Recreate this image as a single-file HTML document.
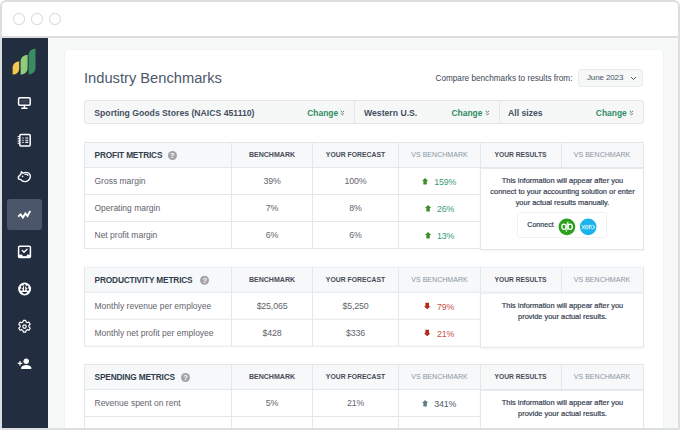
<!DOCTYPE html>
<html>
<head>
<meta charset="utf-8">
<title>Industry Benchmarks</title>
<style>
*{box-sizing:border-box;margin:0;padding:0}
html,body{width:680px;height:430px;overflow:hidden;background:#fff}
body{font-family:"Liberation Sans",sans-serif;color:#3c4656;position:relative}
.abs{position:absolute}
.win{position:absolute;left:0;top:0;width:680px;height:430px;border:2px solid #dcdfe2;border-radius:6px 6px 2px 2px;background:#fff;overflow:hidden}
.inner{position:absolute;left:-2px;top:-2px;width:680px;height:430px}
.dot{position:absolute;top:13.3px;width:11.5px;height:11.5px;border:1.5px solid #d4d5d6;border-radius:50%}
.sep{position:absolute;left:0;top:36px;width:680px;height:2px;background:#dadcde}
.side{position:absolute;left:2px;top:38px;width:46px;height:390px;background:#232d40}
.main{position:absolute;left:48px;top:38px;width:630px;height:390px;background:#f7f9f9}
.card{position:absolute;left:65px;top:50px;width:597.6px;height:400px;background:#fff;box-shadow:0 0 0 .6px #edf0f1,0 0 2px rgba(40,60,80,.06);border-radius:3px}
.active{position:absolute;left:7px;top:199px;width:34.5px;height:31.3px;border-radius:3px;background:#4b566a}
.ico{position:absolute;overflow:visible}
h1{position:absolute;left:84px;top:69.5px;font-size:14.7px;font-weight:400;color:#4c586b;line-height:17px;white-space:nowrap;letter-spacing:0}
.cmp{position:absolute;left:435.5px;top:74.3px;font-size:8.2px;line-height:10px;color:#3c4656;white-space:nowrap}
.dd{position:absolute;left:578px;top:69px;width:65.3px;height:18px;background:#f6f8f8;border:1px solid #e9eced;border-radius:3px}
.dd span{position:absolute;left:8px;top:3.2px;font-size:8px;letter-spacing:-.13px;line-height:10px;color:#4a5566;white-space:nowrap}
.fbar{position:absolute;left:84px;top:99.5px;width:559.5px;height:24.5px;background:#f6f8f8;border:1px solid #e2e6e8;border-radius:3px}
.fbar .dv{position:absolute;top:0;width:1px;height:100%;background:#e2e6e8}
.ft{position:absolute;top:108px;font-size:8.66px;line-height:10px;font-weight:700;color:#444f60;white-space:nowrap}
.chg{position:absolute;top:108px;font-size:8.45px;line-height:10px;font-weight:700;color:#2f8c64;white-space:nowrap}
.tbl{position:absolute;left:84px;width:560px;border:1px solid #e3e7ea;background:#fff}
.hd{position:absolute;left:0;top:0;width:100%;height:25px;background:#f6f8f9;border-bottom:1px solid #e3e7ea}
.vl{position:absolute;top:0;width:1px;background:#e3e7ea}
.hl{position:absolute;left:0;height:1px;background:#e3e7ea;width:396px}
.ttl{position:absolute;left:9.6px;margin-top:-.8px;font-size:8.3px;letter-spacing:-.17px;font-weight:700;color:#333d4c;line-height:10px;white-space:nowrap}
.ch{position:absolute;font-size:7.05px;font-weight:700;color:#474d57;line-height:10px;text-align:center;white-space:nowrap}
.ch.l{font-weight:400;color:#8a96a3}
.rl{position:absolute;left:9.5px;margin-top:-.6px;font-size:8.5px;color:#5f646c;line-height:10px;white-space:nowrap}
.v{position:absolute;margin-top:-.7px;font-size:8.8px;letter-spacing:-.15px;color:#5f646c;line-height:10px;text-align:center;white-space:nowrap}
.g{color:#3a9a78}.r{color:#c4524a}.n{color:#4e5966}
.help{position:absolute;margin:-.5px 0 0 -.9px;width:9.2px;height:9.2px;border-radius:50%;background:#a2a4a7;color:#fff;font-size:7.4px;font-weight:700;line-height:9.6px;text-align:center}
.pan{position:absolute;left:395px;width:164px;background:#fff;border:1px solid #e3e7ea;border-top-color:#e8ebee;box-shadow:0 1px 2px rgba(0,0,0,.05)}
.pt{position:absolute;left:396px;width:163px;margin-top:.4px;font-size:7.45px;line-height:10.9px;color:#364152;-webkit-text-stroke:.2px #364152;text-align:center;white-space:nowrap}
.cbox{position:absolute;left:432px;top:69px;width:90px;height:26px;border:1px solid #eff1f3;border-radius:3px;background:#fff}
</style>
</head>
<body>
<div class="win"><div class="inner">
  <div class="dot" style="left:13.3px"></div>
  <div class="dot" style="left:31.3px"></div>
  <div class="dot" style="left:49.3px"></div>
  <div class="sep"></div>
  <div class="side"></div>
  <div class="main"></div>
  <div class="card"></div>

  <!-- sidebar -->
  <div class="active"></div>
  <svg class="ico" style="left:0;top:0" width="60" height="430" viewBox="0 0 60 430">
    <!-- logo -->
    <path d="M12.6 74.6 V68 C12.6 64 15.5 61.6 19.2 61.6 V68.2 C19.2 72.2 16.3 74.6 12.6 74.6Z" fill="#f4c74f"/>
    <path d="M20.6 74.4 V61.5 C20.6 57.5 23.5 55 27.6 55 V67.9 C27.6 71.9 24.7 74.4 20.6 74.4Z" fill="#8fce78"/>
    <path d="M28.6 74.2 V55.3 C28.6 51.3 31.5 48.8 35.5 48.8 V67.7 C35.5 71.7 32.6 74.2 28.6 74.2Z" fill="#3a8c62"/>
    <!-- monitor -->
    <g fill="none" stroke="#fff" stroke-width="1.5" stroke-linejoin="round" stroke-linecap="round">
      <rect x="18.6" y="97.7" width="11.6" height="7.6" rx="1.2"/>
      <rect x="20.4" y="99.6" width="8" height="3.8" stroke="none" fill="rgba(255,255,255,.1)"/>
      <path d="M24.4 105.5 V108.2 M21.8 108.3 H27"/>
    </g>
    <!-- notebook -->
    <g fill="none" stroke="#fff" stroke-width="1.5" stroke-linejoin="round">
      <rect x="19.8" y="134.4" width="10.4" height="11.6" rx="1.2"/>
    </g>
    <g stroke="#fff" stroke-width="1" fill="none">
      <path d="M17.6 136.6 H19.6 M17.6 138.8 H19.6 M17.6 141 H19.6 M17.6 143.2 H19.6"/>
    </g>
    <g stroke="#fff" stroke-width="1.1" fill="none">
      <path d="M25.3 138 H28.2 M25.3 140.2 H28.2 M25.3 142.4 H28.2"/>
    </g>
    <g stroke="#a8aeb8" stroke-width="1.1" fill="none">
      <path d="M21.8 138 H24 M21.8 140.2 H24 M21.8 142.4 H24"/>
    </g>
    <!-- piggy -->
    <g fill="none" stroke="#fff" stroke-width="1.4" stroke-linejoin="round" stroke-linecap="round">
      <path d="M21.4 171.6 C22 172.6 22.6 173 23 173.2 C24.2 172.5 25.4 172.3 26.4 172.4 C29.2 172.6 30.5 174.8 30.3 176.8 C30.1 179.6 27.5 181.6 24.8 181.6 C22.8 181.6 21.6 180.6 20.8 179.6 L18.4 178.8 V176.4 L19.6 175.8 C20 174.8 20.6 174 21.2 173.4 Z"/>
      <path d="M25 174.3 C26.2 174 27.2 174.4 27.9 175.2" stroke-width="1.3"/>
    </g>
    <circle cx="22.6" cy="176.4" r=".8" fill="#fff"/>
    <!-- chart line -->
    <path d="M18.2 216.6 L20.6 214.4 L22.9 217.6 L25.4 213.4 L27.5 216 L30.2 211" fill="none" stroke="#fff" stroke-width="1.9" stroke-linejoin="miter" stroke-linecap="butt"/>
    <!-- inbox check -->
    <g fill="none" stroke="#fff" stroke-linejoin="round" stroke-linecap="round">
      <rect x="18.6" y="246.3" width="11.8" height="11.3" rx="1" stroke-width="1.5"/>
      <path d="M19 254.9 H22.2 V256.5 H27 V254.9 H30 V257.4 H19Z" stroke-width=".6" fill="#fff"/>
      <path d="M22.3 250.6 L24 252.2 L27 249.2" stroke-width="1.4"/>
    </g>
    <!-- gauge circle -->
    <circle cx="24.6" cy="289" r="6.5" fill="#fff"/>
    <g fill="#232d40">
      <circle cx="21.5" cy="289.5" r="1.2"/><circle cx="22" cy="286.7" r="1.2"/><circle cx="24.65" cy="285.5" r="1.2"/><circle cx="27.3" cy="286.7" r="1.2"/><circle cx="27.8" cy="289.5" r="1.2"/>
      <rect x="24.05" y="286" width="1.2" height="4.6"/>
      <path d="M22 292.1 H27.3 C26.9 293.3 25.9 293.9 24.65 293.9 C23.4 293.9 22.4 293.3 22 292.1Z"/>
    </g>
    <!-- gear -->
    <g fill="none" stroke="#fff" stroke-width="1.2" stroke-linejoin="round">
      <path d="M23.3 320.3 h2.4 l.4 1.7 1.2 .7 1.7 -.5 1.2 2.1 -1.3 1.2 v1.4 l1.3 1.2 -1.2 2.1 -1.7 -.5 -1.2 .7 -.4 1.7 h-2.4 l-.4 -1.7 -1.2 -.7 -1.7 .5 -1.2 -2.1 1.3 -1.2 v-1.4 l-1.3 -1.2 1.2 -2.1 1.7 .5 1.2 -.7z"/>
      <circle cx="24.5" cy="326.6" r="1.7"/>
    </g>
    <!-- person add -->
    <g fill="#fff">
      <circle cx="26.2" cy="361.3" r="2.7"/>
      <path d="M21.2 369 V368 C21.2 366 24 365 26.2 365 C28.4 365 31.3 366 31.3 368 V369Z"/>
      <rect x="17.7" y="362.7" width="4.6" height="1.2"/>
      <rect x="19.4" y="361" width="1.2" height="4.6"/>
    </g>
  </svg>

  <!-- header -->
  <h1>Industry Benchmarks</h1>
  <div class="cmp">Compare benchmarks to results from:</div>
  <div class="dd"><span>June 2023</span>
    <svg class="ico" style="left:50.5px;top:5.5px" width="7" height="5" viewBox="0 0 7 5"><path d="M1 1 L3.5 3.5 L6 1" fill="none" stroke="#4a5566" stroke-width="1"/></svg>
  </div>

  <!-- filter bar -->
  <div class="fbar"><div class="dv" style="left:269px"></div><div class="dv" style="left:413.5px"></div></div>
  <div class="ft" style="left:94.3px">Sporting Goods Stores (NAICS 451110)</div>
  <div class="ft" style="left:364px">Western U.S.</div>
  <div class="ft" style="left:508px">All sizes</div>
  <div class="chg" style="left:307.2px">Change</div>
  <div class="chg" style="left:451.5px">Change</div>
  <div class="chg" style="left:595.8px">Change</div>
  <svg class="ico" style="left:340px;top:110px" width="5" height="6" viewBox="0 0 5 6"><path d="M.7 .9 L2.4 2.4 L4.1 .9 M.7 3.3 L2.4 4.8 L4.1 3.3" fill="none" stroke="#6c7580" stroke-width="1"/></svg>
  <svg class="ico" style="left:484.5px;top:110px" width="5" height="6" viewBox="0 0 5 6"><path d="M.7 .9 L2.4 2.4 L4.1 .9 M.7 3.3 L2.4 4.8 L4.1 3.3" fill="none" stroke="#6c7580" stroke-width="1"/></svg>
  <svg class="ico" style="left:629px;top:110px" width="5" height="6" viewBox="0 0 5 6"><path d="M.7 .9 L2.4 2.4 L4.1 .9 M.7 3.3 L2.4 4.8 L4.1 3.3" fill="none" stroke="#6c7580" stroke-width="1"/></svg>

  <!-- TABLE 1 -->
  <div class="tbl" style="top:142px;height:107px">
    <div class="hd"></div>
    <div class="vl" style="left:146px;height:105px"></div>
    <div class="vl" style="left:227px;height:105px"></div>
    <div class="vl" style="left:313px;height:105px"></div>
    <div class="vl" style="left:395px;height:25px"></div>
    <div class="vl" style="left:476px;height:25px"></div>
    <div class="hl" style="top:51px"></div>
    <div class="hl" style="top:78px"></div>
    <div class="pan" style="top:25px;height:82px"></div>
    <div class="ttl" style="top:8px">PROFIT METRICS</div>
    <div class="help" style="left:83.5px;top:8px">?</div>
    <div class="ch" style="left:147px;width:80px;top:7px">BENCHMARK</div>
    <div class="ch" style="left:228px;width:85px;top:7px;font-size:6.85px">YOUR FORECAST</div>
    <div class="ch l" style="left:314px;width:81px;top:7px">VS BENCHMARK</div>
    <div class="ch" style="left:395.5px;width:80px;top:7px;font-size:6.7px">YOUR RESULTS</div>
    <div class="ch l" style="left:476px;width:82px;top:7px">VS BENCHMARK</div>

    <div class="rl" style="top:34px">Gross margin</div>
    <div class="rl" style="top:61px">Operating margin</div>
    <div class="rl" style="top:88px">Net profit margin</div>
    <div class="v" style="left:147px;width:80px;top:34px">39%</div>
    <div class="v" style="left:147px;width:80px;top:61px">7%</div>
    <div class="v" style="left:147px;width:80px;top:88px">6%</div>
    <div class="v" style="left:228px;width:85px;top:34px">100%</div>
    <div class="v" style="left:228px;width:85px;top:61px">8%</div>
    <div class="v" style="left:228px;width:85px;top:88px">6%</div>
    <div class="v g" style="left:349.3px;top:34.5px">159%</div>
    <div class="v g" style="left:351.9px;top:61.5px">26%</div>
    <div class="v g" style="left:351.9px;top:88.5px">13%</div>
    <svg class="ico" style="left:337.1px;top:35.4px" width="6.2" height="6.5" viewBox="0 0 6.2 6.5"><path d="M3.1 0 L6.2 2.9 H4.85 V6.5 H1.35 V2.9 H0Z" fill="#3b8f25"/></svg>
    <svg class="ico" style="left:339.6px;top:62.4px" width="6.2" height="6.5" viewBox="0 0 6.2 6.5"><path d="M3.1 0 L6.2 2.9 H4.85 V6.5 H1.35 V2.9 H0Z" fill="#3b8f25"/></svg>
    <svg class="ico" style="left:339.6px;top:89.4px" width="6.2" height="6.5" viewBox="0 0 6.2 6.5"><path d="M3.1 0 L6.2 2.9 H4.85 V6.5 H1.35 V2.9 H0Z" fill="#3b8f25"/></svg>

    <div class="pt" style="top:32.5px">This information will appear after you<br>connect to your accounting solution or enter<br>your actual results manually.</div>
    <div class="cbox"></div>
    <div class="abs" style="left:442.3px;top:77.3px;font-size:7.1px;line-height:10px;color:#364152;-webkit-text-stroke:.2px #364152">Connect</div>
    <svg class="ico" style="left:474px;top:74.6px" width="40" height="18" viewBox="0 0 40 18">
      <circle cx="7.9" cy="8.9" r="8.35" fill="#2ca01c"/>
      <g fill="none" stroke="#fff" stroke-width="1.3" transform="translate(7.9 8.9)">
        <ellipse cx="-2.95" cy="-.15" rx="2.1" ry="2.55"/>
        <ellipse cx="3.25" cy="-.15" rx="2.1" ry="2.55"/>
        <path d="M-.55 -3.3 V5.1" stroke-opacity=".7" stroke-width="1.1"/>
        <path d="M.95 -5.1 V3.2" stroke-width="1.2"/>
      </g>
      <circle cx="29.2" cy="8.9" r="8.3" fill="#1ab4ea"/>
      <g fill="none" stroke="#fff" stroke-width=".75" stroke-opacity=".92" stroke-linecap="round" transform="translate(-.3 0)">
        <path d="M23.3 7.2 L25.9 11 M25.9 7.2 L23.3 11"/>
        <path d="M26.5 9.1 H29.8 A1.7 1.8 0 1 0 29.3 10.4"/>
        <path d="M30.7 11 V7.2 M30.7 8.6 A1.5 1.5 0 0 1 32 7.2"/>
        <ellipse cx="34" cy="9.1" rx="1.7" ry="1.85"/>
      </g>
    </svg>
  </div>

  <!-- TABLE 2 -->
  <div class="tbl" style="top:266px;height:80px;transform:translateY(.7px)">
    <div class="hd"></div>
    <div class="vl" style="left:146px;height:78px"></div>
    <div class="vl" style="left:227px;height:78px"></div>
    <div class="vl" style="left:313px;height:78px"></div>
    <div class="vl" style="left:395px;height:25px"></div>
    <div class="vl" style="left:476px;height:25px"></div>
    <div class="hl" style="top:51px"></div>
    <div class="pan" style="top:25px;height:55px"></div>
    <div class="ttl" style="top:8px">PRODUCTIVITY METRICS</div>
    <div class="help" style="left:116px;top:8px">?</div>
    <div class="ch" style="left:147px;width:80px;top:7px">BENCHMARK</div>
    <div class="ch" style="left:228px;width:85px;top:7px;font-size:6.85px">YOUR FORECAST</div>
    <div class="ch l" style="left:314px;width:81px;top:7px">VS BENCHMARK</div>
    <div class="ch" style="left:395.5px;width:80px;top:7px;font-size:6.7px">YOUR RESULTS</div>
    <div class="ch l" style="left:476px;width:82px;top:7px">VS BENCHMARK</div>

    <div class="rl" style="top:34px">Monthly revenue per employee</div>
    <div class="rl" style="top:61px">Monthly net profit per employee</div>
    <div class="v" style="left:147px;width:80px;top:34px">$25,065</div>
    <div class="v" style="left:147px;width:80px;top:61px">$428</div>
    <div class="v" style="left:228px;width:85px;top:34px">$5,250</div>
    <div class="v" style="left:228px;width:85px;top:61px">$336</div>
    <div class="v r" style="left:352px;top:34.5px">79%</div>
    <div class="v r" style="left:352px;top:61.5px">21%</div>
    <svg class="ico" style="left:339.3px;top:35.1px" width="6.4" height="6.5" viewBox="0 0 6.4 6.5"><path d="M3.2 6.5 L6.4 3.5 H5 V0 H1.4 V3.5 H0Z" fill="#b5271d"/></svg>
    <svg class="ico" style="left:339.3px;top:62.1px" width="6.4" height="6.5" viewBox="0 0 6.4 6.5"><path d="M3.2 6.5 L6.4 3.5 H5 V0 H1.4 V3.5 H0Z" fill="#b5271d"/></svg>

    <div class="pt" style="top:32.5px">This information will appear after you<br>provide your actual results.</div>
  </div>

  <!-- TABLE 3 -->
  <div class="tbl" style="top:364px;height:90px">
    <div class="hd"></div>
    <div class="vl" style="left:146px;height:90px"></div>
    <div class="vl" style="left:227px;height:90px"></div>
    <div class="vl" style="left:313px;height:90px"></div>
    <div class="vl" style="left:395px;height:25px"></div>
    <div class="vl" style="left:476px;height:25px"></div>
    <div class="hl" style="top:51px"></div>
    <div class="pan" style="top:25px;height:82px"></div>
    <div class="ttl" style="top:8px">SPENDING METRICS</div>
    <div class="help" style="left:96.8px;top:8px">?</div>
    <div class="ch" style="left:147px;width:80px;top:7px">BENCHMARK</div>
    <div class="ch" style="left:228px;width:85px;top:7px;font-size:6.85px">YOUR FORECAST</div>
    <div class="ch l" style="left:314px;width:81px;top:7px">VS BENCHMARK</div>
    <div class="ch" style="left:395.5px;width:80px;top:7px;font-size:6.7px">YOUR RESULTS</div>
    <div class="ch l" style="left:476px;width:82px;top:7px">VS BENCHMARK</div>

    <div class="rl" style="top:34px">Revenue spent on rent</div>
    <div class="v" style="left:147px;width:80px;top:34px">5%</div>
    <div class="v" style="left:228px;width:85px;top:34px">21%</div>
    <div class="v n" style="left:349.3px;top:34.5px">341%</div>
    <svg class="ico" style="left:337.1px;top:35.4px" width="6.2" height="6.5" viewBox="0 0 6.2 6.5"><path d="M3.1 0 L6.2 2.9 H4.85 V6.5 H1.35 V2.9 H0Z" fill="#5f7f86"/></svg>

    <div class="pt" style="top:32.5px">This information will appear after you<br>provide your actual results.</div>
  </div>
</div></div>
</body>
</html>
